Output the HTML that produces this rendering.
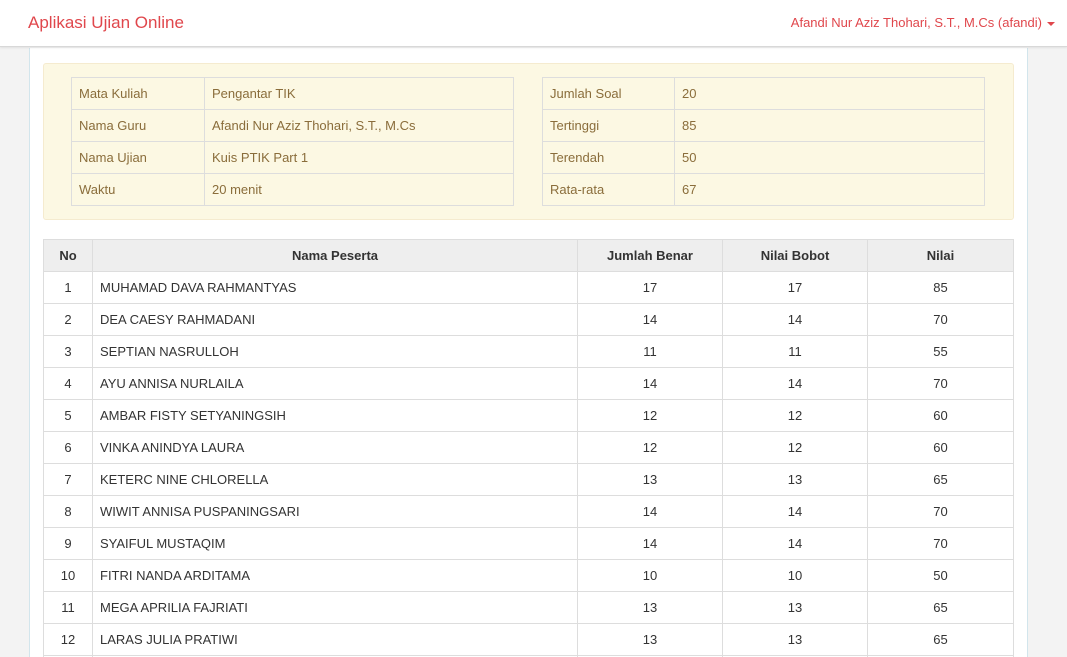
<!DOCTYPE html>
<html><head><style>
*{box-sizing:border-box;margin:0;padding:0}
html,body{width:1067px;height:657px;overflow:hidden}
body{background:#f3f3f3;font-family:"Liberation Sans",sans-serif;font-size:13px;color:#333;position:relative}
.hdr{position:absolute;left:0;top:0;width:1067px;height:47px;background:#fff;border-bottom:1px solid #d8d8d8;box-shadow:0 1px 2px rgba(0,0,0,.08);z-index:2}
.brand{position:absolute;left:28px;top:13px;font-size:17px;color:#e0474c}
.user{position:absolute;right:12px;top:15px;font-size:13px;color:#e0474c}
.caret{display:inline-block;border-left:4px solid transparent;border-right:4px solid transparent;border-top:4px solid #e0474c;vertical-align:middle;margin-left:5px}
.wrap{position:absolute;left:29px;top:48px;width:999px;height:609px;overflow:hidden;background:#fff;border-left:1px solid #d2e5ec;border-right:1px solid #d2e5ec}
.panel{position:absolute;left:13px;top:15px;width:971px;height:157px;background:#fcf8e3;border:1px solid #f5ebcf;border-radius:3px}
table{border-collapse:collapse}
.info{position:absolute;top:13px;color:#8a6d3b}
.info td{border:1px solid #ddd;height:32px;padding:0 7px}
table.main{position:absolute;left:13px;top:191px;width:971px}
.main td,.main th{border:1px solid #ddd;height:32px;padding:0 7px}
.main th{background:#eee;font-weight:bold;text-align:center}
.c{text-align:center}
</style></head><body>
<div class="hdr"><div class="brand">Aplikasi Ujian Online</div><div class="user">Afandi Nur Aziz Thohari, S.T., M.Cs (afandi)<span class="caret"></span></div></div>
<div class="wrap">
<div class="panel">
<table class="info" style="left:27px;width:443px"><tr><td style="width:133px">Mata Kuliah</td><td>Pengantar TIK</td></tr><tr><td>Nama Guru</td><td>Afandi Nur Aziz Thohari, S.T., M.Cs</td></tr><tr><td>Nama Ujian</td><td>Kuis PTIK Part 1</td></tr><tr><td>Waktu</td><td>20 menit</td></tr></table>
<table class="info" style="left:498px;width:443px"><tr><td style="width:132px">Jumlah Soal</td><td>20</td></tr><tr><td>Tertinggi</td><td>85</td></tr><tr><td>Terendah</td><td>50</td></tr><tr><td>Rata-rata</td><td>67</td></tr></table>
</div>
<table class="main">
<tr><th style="width:49px">No</th><th style="width:485px">Nama Peserta</th><th style="width:145px">Jumlah Benar</th><th style="width:145px">Nilai Bobot</th><th>Nilai</th></tr>
<tr><td class="c">1</td><td>MUHAMAD DAVA RAHMANTYAS</td><td class="c">17</td><td class="c">17</td><td class="c">85</td></tr>
<tr><td class="c">2</td><td>DEA CAESY RAHMADANI</td><td class="c">14</td><td class="c">14</td><td class="c">70</td></tr>
<tr><td class="c">3</td><td>SEPTIAN NASRULLOH</td><td class="c">11</td><td class="c">11</td><td class="c">55</td></tr>
<tr><td class="c">4</td><td>AYU ANNISA NURLAILA</td><td class="c">14</td><td class="c">14</td><td class="c">70</td></tr>
<tr><td class="c">5</td><td>AMBAR FISTY SETYANINGSIH</td><td class="c">12</td><td class="c">12</td><td class="c">60</td></tr>
<tr><td class="c">6</td><td>VINKA ANINDYA LAURA</td><td class="c">12</td><td class="c">12</td><td class="c">60</td></tr>
<tr><td class="c">7</td><td>KETERC NINE CHLORELLA</td><td class="c">13</td><td class="c">13</td><td class="c">65</td></tr>
<tr><td class="c">8</td><td>WIWIT ANNISA PUSPANINGSARI</td><td class="c">14</td><td class="c">14</td><td class="c">70</td></tr>
<tr><td class="c">9</td><td>SYAIFUL MUSTAQIM</td><td class="c">14</td><td class="c">14</td><td class="c">70</td></tr>
<tr><td class="c">10</td><td>FITRI NANDA ARDITAMA</td><td class="c">10</td><td class="c">10</td><td class="c">50</td></tr>
<tr><td class="c">11</td><td>MEGA APRILIA FAJRIATI</td><td class="c">13</td><td class="c">13</td><td class="c">65</td></tr>
<tr><td class="c">12</td><td>LARAS JULIA PRATIWI</td><td class="c">13</td><td class="c">13</td><td class="c">65</td></tr>
<tr><td class="c">&nbsp;</td><td>&nbsp;</td><td></td><td></td><td></td></tr>
</table>
</div>
</body></html>
